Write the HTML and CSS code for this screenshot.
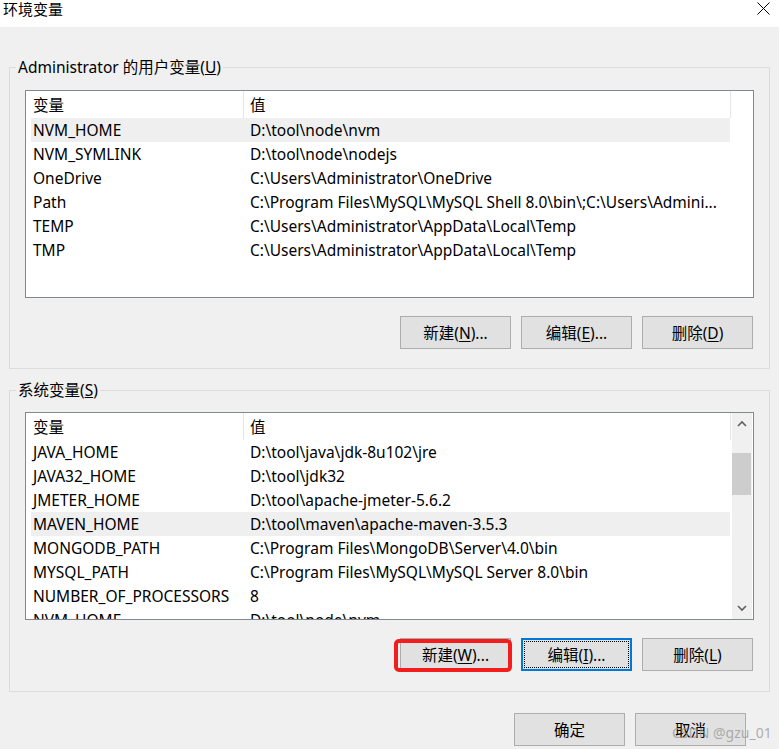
FILE: index.html
```html
<!DOCTYPE html>
<html lang="zh-CN">
<head>
<meta charset="utf-8">
<title>环境变量</title>
<link rel="stylesheet" href="styles.css">
</head>
<body>
<div class="window">
  <div class="titlebar">
    <span class="title">环境变量</span>
    <svg class="close" width="13" height="13" viewBox="0 0 13 13"><path d="M0.5 0.5 L12.5 12.5 M12.5 0.5 L0.5 12.5" stroke="#000" stroke-width="1" fill="none"/></svg>
  </div>
  <div class="content">
    <fieldset class="group group-user">
      <legend>Administrator 的用户变量(<u>U</u>)</legend>
      <div class="list">
        <div class="list-main">
          <div class="header"><div class="hcol h1">变量</div><div class="hcol h2">值</div></div>
          <div class="row sel"><span class="c1">NVM_HOME</span><span class="c2">D:\tool\node\nvm</span></div>
          <div class="row"><span class="c1">NVM_SYMLINK</span><span class="c2">D:\tool\node\nodejs</span></div>
          <div class="row"><span class="c1">OneDrive</span><span class="c2">C:\Users\Administrator\OneDrive</span></div>
          <div class="row"><span class="c1">Path</span><span class="c2">C:\Program Files\MySQL\MySQL Shell 8.0\bin\;C:\Users\Admini...</span></div>
          <div class="row"><span class="c1">TEMP</span><span class="c2">C:\Users\Administrator\AppData\Local\Temp</span></div>
          <div class="row"><span class="c1">TMP</span><span class="c2">C:\Users\Administrator\AppData\Local\Temp</span></div>
        </div>
      </div>
      <div class="buttons">
        <button class="btn">新建(<u>N</u>)...</button>
        <button class="btn">编辑(<u>E</u>)...</button>
        <button class="btn">删除(<u>D</u>)</button>
      </div>
    </fieldset>

    <fieldset class="group group-sys">
      <legend>系统变量(<u>S</u>)</legend>
      <div class="list">
        <div class="list-main">
          <div class="header"><div class="hcol h1">变量</div><div class="hcol h2">值</div></div>
          <div class="row"><span class="c1">JAVA_HOME</span><span class="c2">D:\tool\java\jdk-8u102\jre</span></div>
          <div class="row"><span class="c1">JAVA32_HOME</span><span class="c2">D:\tool\jdk32</span></div>
          <div class="row"><span class="c1">JMETER_HOME</span><span class="c2">D:\tool\apache-jmeter-5.6.2</span></div>
          <div class="row sel"><span class="c1">MAVEN_HOME</span><span class="c2">D:\tool\maven\apache-maven-3.5.3</span></div>
          <div class="row"><span class="c1">MONGODB_PATH</span><span class="c2">C:\Program Files\MongoDB\Server\4.0\bin</span></div>
          <div class="row"><span class="c1">MYSQL_PATH</span><span class="c2">C:\Program Files\MySQL\MySQL Server 8.0\bin</span></div>
          <div class="row"><span class="c1">NUMBER_OF_PROCESSORS</span><span class="c2">8</span></div>
          <div class="row"><span class="c1">NVM_HOME</span><span class="c2">D:\tool\node\nvm</span></div>
        </div>
        <div class="scrollbar">
          <div class="sb-arrow"><svg width="10" height="7" viewBox="0 0 10 7"><path d="M1 6 L5 2 L9 6" stroke="#606060" stroke-width="1.6" fill="none"/></svg></div>
          <div class="sb-track"><div class="sb-thumb"></div></div>
          <div class="sb-arrow"><svg width="10" height="7" viewBox="0 0 10 7"><path d="M1 1 L5 5 L9 1" stroke="#606060" stroke-width="1.6" fill="none"/></svg></div>
        </div>
      </div>
      <div class="buttons">
        <button class="btn marked">新建(<u>W</u>)...</button>
        <button class="btn focused">编辑(<u>I</u>)...</button>
        <button class="btn">删除(<u>L</u>)</button>
      </div>
    </fieldset>

    <div class="dialog-buttons">
      <button class="btn">确定</button>
      <button class="btn">取消</button>
    </div>
  </div>
  <span class="watermark">CSDN @gzu_01</span>
</div>
</body>
</html>
```

FILE: styles.css
```css
* { box-sizing: border-box; }
html, body { margin: 0; padding: 0; }
body {
  width: 779px;
  height: 749px;
  overflow: hidden;
  background: #f0f0f0;
  font-family: "Noto Sans", "Noto Sans CJK SC", sans-serif;
  font-size: 15.5px;
  color: #000;
}
.window { position: relative; width: 779px; height: 749px; }
.titlebar {
  height: 27px;
  background: #fff;
  display: flex;
  align-items: flex-start;
  justify-content: space-between;
  padding: 0 9px 0 3px;
}
.title { line-height: 18px; font-size: 15px; }
.close { margin-top: 2px; }

.content { display: flex; flex-direction: column; }

.group {
  margin: 0 0 0 9px;
  width: 761px;
  border: 1px solid #dcdcdc;
  padding: 13px 15px 19px 15px;
  min-width: 0;
}
.group legend {
  padding: 0 2px;
  margin-left: -9px;
  line-height: 20px;
  height: 20px;
}
.group-user { margin-top: 30px; }
.group-sys { margin-top: 11px; padding-top: 12px; padding-bottom: 20px; }

.list {
  width: 729px;
  height: 208px;
  border: 1px solid #828790;
  background: #fff;
  display: flex;
  overflow: hidden;
}
.list-main { width: 705px; flex: none; overflow: hidden; }
.header { display: flex; height: 27px; }
.hcol {
  height: 27px;
  line-height: 25px;
  padding-top: 2px;
  border-right: 1px solid #e5e5e5;
  white-space: nowrap;
}
.h1 { width: 218px; padding-left: 7px; }
.h2 { width: 487px; padding-left: 6px; }
.row {
  display: flex;
  height: 24px;
  line-height: 24px;
  margin-left: 5px;
  width: 699px;
  white-space: nowrap;
}
.row.sel { background: #efefef; }
.c1 { width: 212px; padding-left: 2px; flex: none; }
.c2 { padding-left: 7px; overflow: hidden; }

.scrollbar {
  width: 20px;
  margin-left: auto;
  margin-right: 1px;
  background: #f0f0f0;
  display: flex;
  flex-direction: column;
}
.sb-arrow { height: 21px; display: flex; align-items: center; justify-content: center; flex: none; }
.sb-track { flex: 1; padding-top: 19px; }
.sb-thumb { width: 19px; height: 42px; background: #cdcdcd; }

.buttons {
  display: flex;
  justify-content: flex-end;
  gap: 10px;
  margin-top: 18px;
  padding-right: 1px;
}
.btn {
  position: relative;
  width: 111px;
  height: 33px;
  background: #e1e1e1;
  border: 1px solid #adadad;
  font-family: inherit;
  font-size: 15.5px;
  color: #000;
  padding: 0;
  margin: 0;
}
.btn u { text-underline-offset: 2px; }
.btn.focused {
  border: 2px solid #0078d7;
  outline: 1px dotted #000;
  outline-offset: -4px;
}
.btn.marked::after {
  content: "";
  position: absolute;
  left: -7px;
  right: -2px;
  top: 0px;
  bottom: -2px;
  border: 4px solid #f41d1d;
  border-radius: 5px;
}

.dialog-buttons {
  display: flex;
  justify-content: flex-end;
  gap: 10px;
  margin-top: 21px;
  padding-right: 33px;
}

.watermark {
  position: absolute;
  left: 672px;
  top: 723px;
  font-size: 14px;
  color: rgba(150, 150, 150, 0.75);
  white-space: nowrap;
}
```
